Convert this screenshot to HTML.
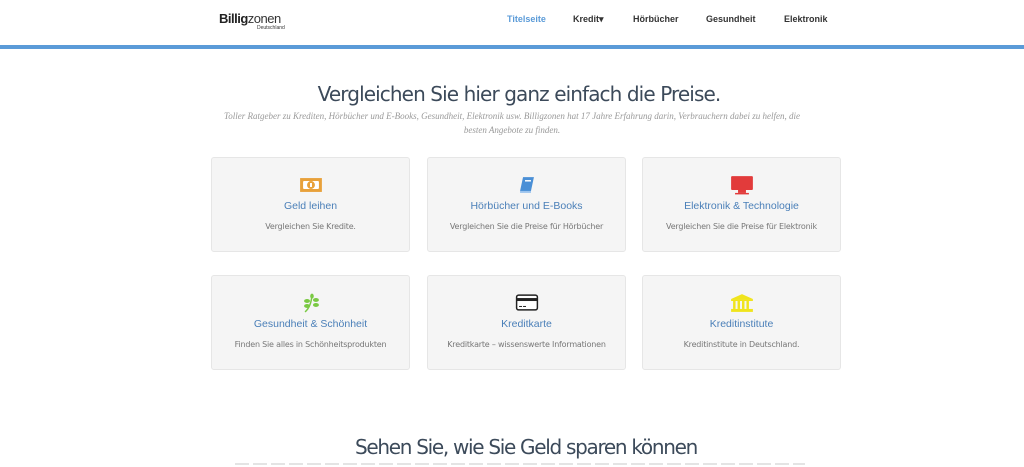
<!DOCTYPE html>
<html><head><meta charset="utf-8"><style>
*{margin:0;padding:0;box-sizing:border-box}
body{width:1024px;height:467px;overflow:hidden;background:#fff;font-family:"Liberation Sans",sans-serif;position:relative}
.hdr{position:absolute;left:0;top:0;width:1024px;height:46px;background:#fff}
.bar{position:absolute;left:0;top:45px;width:1024px;height:4px;background:#5b9bd8}
.logo{position:absolute;left:219px;top:11px;font-size:13px;color:#222;letter-spacing:-0.5px}
.logo b{font-weight:bold}
.logo span{font-weight:normal;color:#333}
.logo small{position:absolute;left:38px;top:14px;font-size:5px;color:#333;letter-spacing:0}
.nav{position:absolute;top:14px;font-size:9px;font-weight:bold;color:#333}
h1{position:absolute;top:82px;left:7px;width:1024px;text-align:center;font-family:"DejaVu Sans",sans-serif;font-weight:normal;font-size:20px;color:#3c4a5a;letter-spacing:-0.9px}
.sub{position:absolute;left:220px;top:109px;width:584px;text-align:center;font-family:"Liberation Serif",serif;font-style:italic;font-size:9px;line-height:14px;color:#999}
.card{position:absolute;width:199px;height:95px;background:#f5f5f5;border:1px solid #e6e6e6;border-radius:3px;text-align:center}
.card .ic{position:absolute;left:0;top:17px;width:100%;height:20px}
.card .t{position:absolute;top:42px;width:100%;font-size:10.5px;color:#4a7fb8}
.card .d{position:absolute;top:64px;width:100%;font-size:8px;color:#777;font-family:"DejaVu Sans",sans-serif;letter-spacing:-0.2px}
h2{position:absolute;top:435px;left:14px;width:1024px;text-align:center;font-family:"DejaVu Sans",sans-serif;font-weight:normal;font-size:20px;color:#3c4a5a;letter-spacing:-1.3px}
.sub2{position:absolute;left:235px;top:463px;width:570px;height:2px;background:repeating-linear-gradient(90deg,#e4e4e4 0 14px,#fff 14px 18px)}
</style></head><body>
<div class="hdr">
<div class="logo"><b>Billig</b><span>zonen</span><small>Deutschland</small></div>
<div class="nav" style="left:507px;color:#5b9bd8">Titelseite</div>
<div class="nav" style="left:573px">Kredit▾</div>
<div class="nav" style="left:633px">Hörbücher</div>
<div class="nav" style="left:706px">Gesundheit</div>
<div class="nav" style="left:784px">Elektronik</div>
</div>
<div class="bar"></div>
<h1>Vergleichen Sie hier ganz einfach die Preise.</h1>
<div class="sub">Toller Ratgeber zu Krediten, Hörbücher und E-Books, Gesundheit, Elektronik usw. Billigzonen hat 17 Jahre Erfahrung darin, Verbrauchern dabei zu helfen, die besten Angebote zu finden.</div>

<div class="card" style="left:211px;top:157px">
<svg class="ic" viewBox="0 0 199 20"><rect x="89" y="3" width="22" height="14" fill="#e8a13a"/><rect x="92" y="6" width="16" height="8" fill="#fff" rx="1"/><circle cx="100" cy="10" r="4" fill="#e8a13a"/><rect x="99" y="8" width="2" height="4" fill="#fff"/></svg>
<div class="t">Geld leihen</div><div class="d">Vergleichen Sie Kredite.</div></div>

<div class="card" style="left:427px;top:157px">
<svg class="ic" viewBox="0 0 199 20"><path d="M93 16 L96 2 H107 L104 16 Z" fill="#4a8fd6"/><path d="M93 16 L93 18 H104 L104 16" fill="#9cc4ee"/><rect x="98" y="5" width="6" height="1.5" fill="#fff"/></svg>
<div class="t">Hörbücher und E-Books</div><div class="d">Vergleichen Sie die Preise für Hörbücher</div></div>

<div class="card" style="left:642px;top:157px">
<svg class="ic" viewBox="0 0 199 20"><rect x="89" y="1" width="22" height="14" rx="1" fill="#e23b3b"/><rect x="96" y="15" width="8" height="3" fill="#e23b3b"/><rect x="93" y="18" width="14" height="1.5" fill="#e23b3b"/></svg>
<div class="t">Elektronik &amp; Technologie</div><div class="d">Vergleichen Sie die Preise für Elektronik</div></div>

<div class="card" style="left:211px;top:275px">
<svg class="ic" viewBox="0 0 199 20"><path d="M94 19 Q100 14 101 2" stroke="#7ac943" stroke-width="1.5" fill="none"/><ellipse cx="96" cy="8" rx="3" ry="2" fill="#7ac943"/><ellipse cx="105" cy="7" rx="3" ry="2" fill="#7ac943"/><ellipse cx="96" cy="13" rx="3" ry="2" fill="#7ac943"/><ellipse cx="105" cy="12" rx="3" ry="2" fill="#7ac943"/><ellipse cx="101" cy="3" rx="1.8" ry="2.5" fill="#7ac943"/></svg>
<div class="t">Gesundheit &amp; Schönheit</div><div class="d">Finden Sie alles in Schönheitsprodukten</div></div>

<div class="card" style="left:427px;top:275px">
<svg class="ic" viewBox="0 0 199 20"><rect x="89.5" y="2" width="21" height="15" rx="2" fill="#fff" stroke="#222" stroke-width="1.5"/><rect x="89.5" y="5" width="21" height="3" fill="#222"/><rect x="92" y="13" width="3" height="1" fill="#222"/><rect x="96" y="13" width="3" height="1" fill="#222"/></svg>
<div class="t">Kreditkarte</div><div class="d">Kreditkarte – wissenswerte Informationen</div></div>

<div class="card" style="left:642px;top:275px">
<svg class="ic" viewBox="0 0 199 20"><path d="M89 6 L100 1 L111 6 Z" fill="#f0e41c"/><rect x="89" y="6" width="22" height="2" fill="#f0e41c"/><rect x="91" y="8" width="2.5" height="8" fill="#f0e41c"/><rect x="95.5" y="8" width="2.5" height="8" fill="#f0e41c"/><rect x="100" y="8" width="2.5" height="8" fill="#f0e41c"/><rect x="104.5" y="8" width="2.5" height="8" fill="#f0e41c"/><rect x="89" y="16" width="22" height="3" fill="#f0e41c"/></svg>
<div class="t">Kreditinstitute</div><div class="d">Kreditinstitute in Deutschland.</div></div>

<h2>Sehen Sie, wie Sie Geld sparen können</h2>
<div class="sub2"></div>
</body></html>
